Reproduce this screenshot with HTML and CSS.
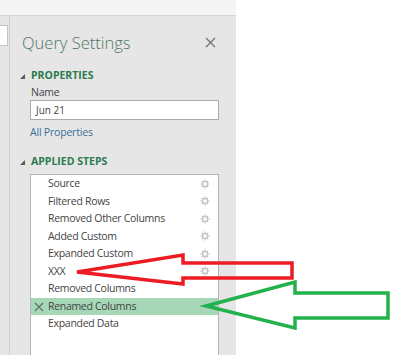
FILE: index.html
```html
<!DOCTYPE html>
<html lang="en">
<head>
  <meta charset="UTF-8" />
  <title>Query Settings</title>
  <link rel="stylesheet" href="styles.css">
</head>
<body>
  <div class="side">
    <div class="topbar"></div>
    <div class="side-body">
      <div class="mini">
        <div class="mini-box"></div>
      </div>
      <div class="settings">
        <div class="header">
          <span class="title">Query Settings</span>
          <svg class="close" width="11" height="11" viewBox="0 0 11 11">
            <path d="M1 1 L10 10 M10 1 L1 10" stroke="#6f6f6f" stroke-width="1.2" />
          </svg>
        </div>

        <div class="section-head">
          <svg class="tri" width="5" height="5" viewBox="0 0 5 5"><polygon points="5,0 5,5 0,5" fill="#5a5a5a" /></svg>
          <span>PROPERTIES</span>
        </div>
        <div class="label">Name</div>
        <div class="name-input">Jun 21</div>
        <div class="link">All Properties</div>

        <div class="section-head steps-head">
          <svg class="tri" width="5" height="5" viewBox="0 0 5 5"><polygon points="5,0 5,5 0,5" fill="#5a5a5a" /></svg>
          <span>APPLIED STEPS</span>
        </div>
        <div class="steps">
          <div class="step"><span class="step-name">Source</span><span class="gear"></span></div>
          <div class="step"><span class="step-name">Filtered Rows</span><span class="gear"></span></div>
          <div class="step"><span class="step-name">Removed Other Columns</span><span class="gear"></span></div>
          <div class="step"><span class="step-name">Added Custom</span><span class="gear"></span></div>
          <div class="step"><span class="step-name">Expanded Custom</span><span class="gear"></span></div>
          <div class="step"><span class="step-name">XXX</span><span class="gear"></span></div>
          <div class="step"><span class="step-name">Removed Columns</span></div>
          <div class="step selected">
            <svg class="del" width="10" height="10" viewBox="0 0 10 10">
              <path d="M1 1 L9 9 M9 1 L1 9" stroke="#5f6f66" stroke-width="1.1" />
            </svg>
            <span class="step-name">Renamed Columns</span>
          </div>
          <div class="step"><span class="step-name">Expanded Data</span></div>
        </div>
      </div>
    </div>
  </div>
  <div class="canvas"></div>

  <svg class="arrows" width="403" height="355" viewBox="0 0 403 355">
    <polygon points="77,272 183,255 183,263 292,263 292,278 183,278 183,284" fill="none" stroke="#ed1c24" stroke-width="3.5" stroke-linejoin="miter" />
    <polygon points="206,306 295,282 295,293 388,293 388,318 295,318 295,328" fill="none" stroke="#22b14c" stroke-width="3.5" stroke-linejoin="miter" />
  </svg>

  <script>
    // gear glyphs for the step settings buttons
    document.querySelectorAll(".gear").forEach((el) => {
      el.innerHTML =
        '<svg width="10" height="10" viewBox="0 0 10 10">' +
        '<path d="M5 0.5 V9.5 M0.5 5 H9.5 M1.8 1.8 L8.2 8.2 M8.2 1.8 L1.8 8.2" stroke="#b4b4b4" stroke-width="1.1"/>' +
        '<circle cx="5" cy="5" r="2.4" fill="#fff" stroke="#b4b4b4" stroke-width="1"/>' +
        "</svg>";
    });
  </script>
</body>
</html>
```

FILE: styles.css
```css
body {
  margin: 0;
  width: 403px;
  height: 355px;
  overflow: hidden;
  display: flex;
  position: relative;
  font-family: "Open Sans", "Noto Sans", sans-serif;
  color: #444;
  background: #fff;
}
.side {
  width: 236px;
  height: 355px;
  overflow: hidden;
  display: flex;
  flex-direction: column;
  background: #e6e6e6;
}
.topbar {
  flex-shrink: 0;
  height: 15px;
  background: #f4f4f4;
  border-bottom: 1px solid #d6d6d6;
}
.side-body {
  flex: 1;
  min-height: 0;
  display: flex;
}
.mini {
  width: 9px;
  border-right: 1px solid #cfcfcf;
  padding-top: 9px;
}
.mini-box {
  width: 7px;
  height: 19px;
  background: #fff;
  border: 1px solid #c4c4c4;
  border-left: none;
}
.settings {
  flex: 1;
  padding: 0 0 0 10px;
}
.header {
  display: flex;
  align-items: center;
  justify-content: space-between;
  height: 26px;
  margin-top: 13px;
  padding: 0 20px 0 2px;
}
.title {
  font-size: 16.5px;
  font-weight: 300;
  color: #4f7664;
}
.section-head {
  display: flex;
  align-items: center;
  margin-top: 13px;
  font-size: 10.5px;
  font-weight: 700;
  color: #2d7a4e;
  height: 14px;
}
.tri {
  margin: 3px 6px 0 0;
}
.steps-head {
  margin-top: 15px;
}
.label {
  margin: 3px 0 0 11px;
  font-size: 10.5px;
  height: 14px;
  line-height: 14px;
  letter-spacing: -0.2px;
}
.name-input {
  margin: 1px 0 0 10px;
  width: 182px;
  height: 18px;
  line-height: 18px;
  padding-left: 5px;
  background: #fff;
  border: 1px solid #ababab;
  font-size: 10px;
}
.link {
  margin: 5px 0 0 10px;
  font-size: 10.5px;
  letter-spacing: -0.2px;
  color: #3a6f9a;
}
.steps {
  margin: 6px 0 0 10px;
  width: 187px;
  height: 190px;
  background: #fff;
  border: 1px solid #b4b4b4;
  font-size: 10.5px;
  letter-spacing: -0.3px;
}
.step {
  position: relative;
  height: 17.5px;
  line-height: 17.5px;
  padding-left: 17px;
  display: flex;
  justify-content: space-between;
  align-items: center;
}
.gear {
  display: flex;
  margin-right: 8px;
}
.selected {
  background: #a6d7b7;
}
.del {
  position: absolute;
  left: 3px;
  top: 4px;
}
.canvas {
  flex: 1;
  background: #fff;
}
.arrows {
  position: absolute;
  left: 0;
  top: 0;
  pointer-events: none;
}
```
